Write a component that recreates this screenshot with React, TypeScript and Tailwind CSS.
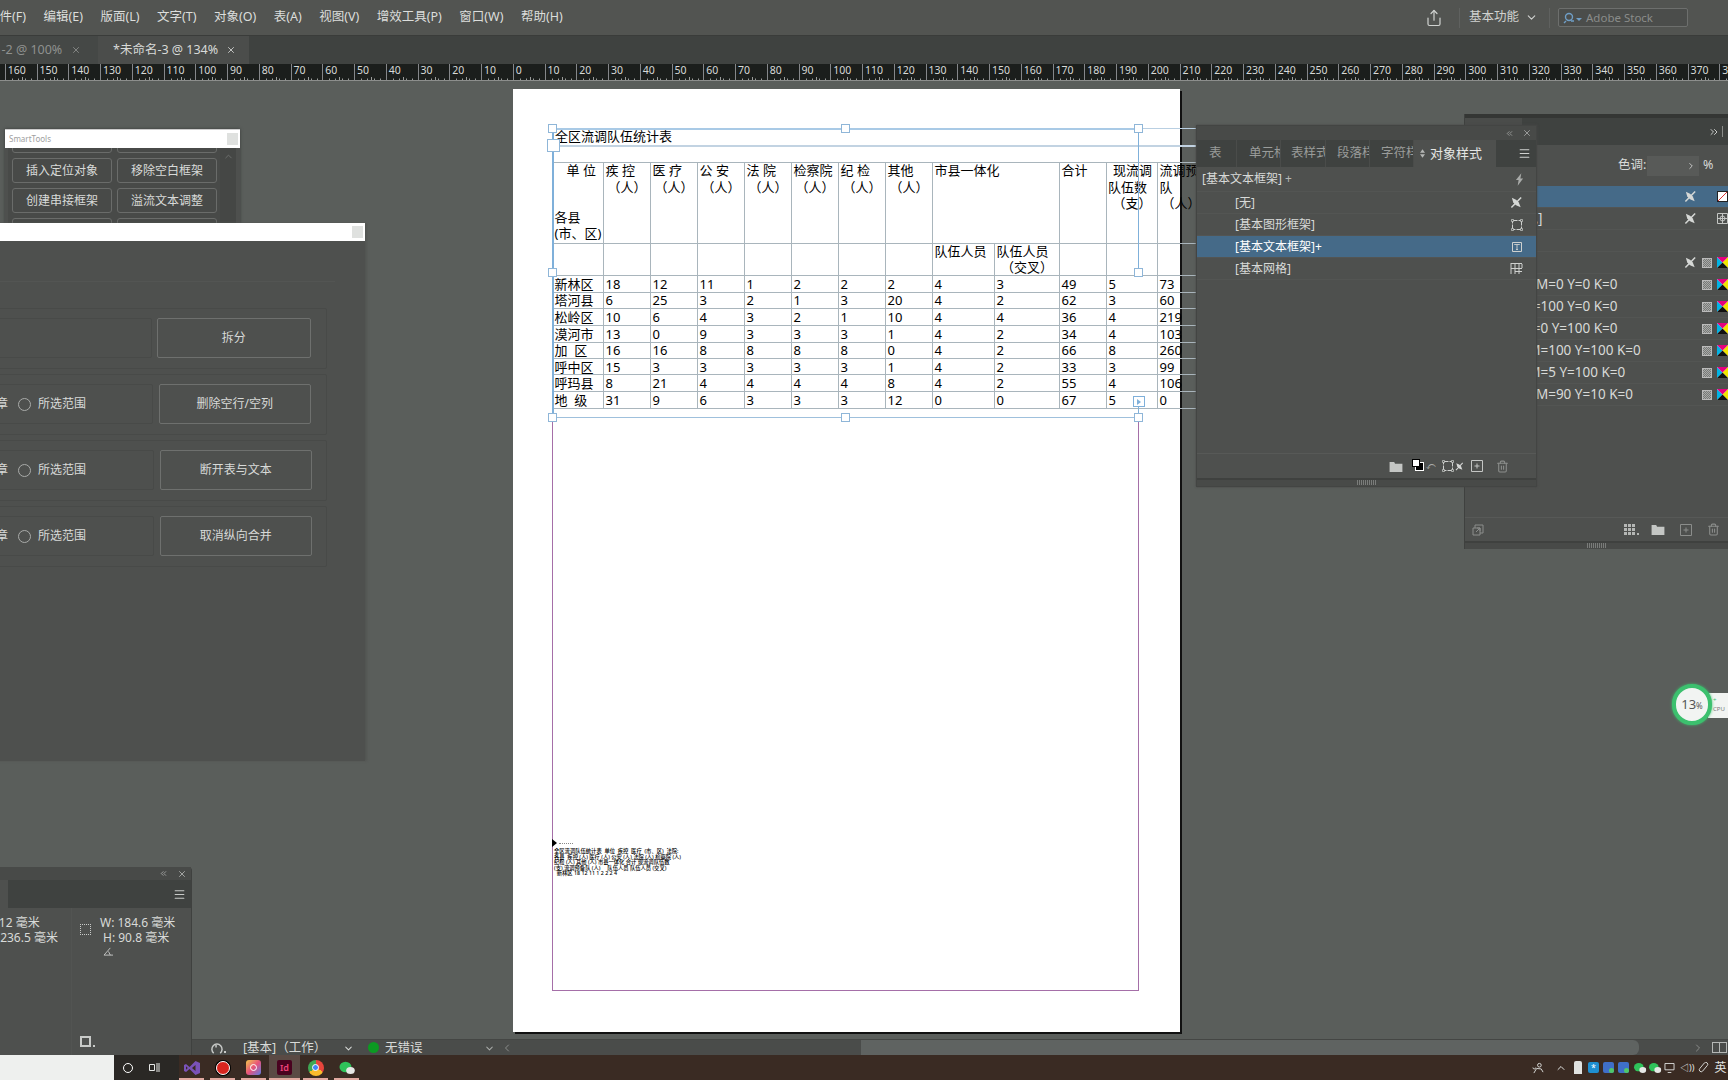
import React from 'react'
import { ChevronDown, ChevronLeft, ChevronRight, ChevronUp, ChevronsLeft, ChevronsRight, Menu, Share, Trash2, X } from 'lucide-react'

const font = { fontFamily: '"Noto Sans", "Noto Sans CJK SC", sans-serif' }

const menus = ['文件(F)', '编辑(E)', '版面(L)', '文字(T)', '对象(O)', '表(A)', '视图(V)', '增效工具(P)', '窗口(W)', '帮助(H)']

const rulerMarks: number[] = []
for (let n = -170; n <= 390; n += 10) rulerMarks.push(n)

const colWidths = [51, 47, 47, 47, 47, 47, 47, 47, 62, 65, 47, 51, 47]

const bodyRows = [
  { h: 'h-[16.3px]', cells: ['新林区', '18', '12', '11', '1', '2', '2', '2', '4', '3', '49', '5', '73'] },
  { h: 'h-[16.3px]', cells: ['塔河县', '6', '25', '3', '2', '1', '3', '20', '4', '2', '62', '3', '60'] },
  { h: 'h-[17px]', cells: ['松岭区', '10', '6', '4', '3', '2', '1', '10', '4', '4', '36', '4', '219'] },
  { h: 'h-[16.7px]', cells: ['漠河市', '13', '0', '9', '3', '3', '3', '1', '4', '2', '34', '4', '103'] },
  { h: 'h-[16.3px]', cells: ['加  区', '16', '16', '8', '8', '8', '8', '0', '4', '2', '66', '8', '260'] },
  { h: 'h-[16.4px]', cells: ['呼中区', '15', '3', '3', '3', '3', '3', '1', '4', '2', '33', '3', '99'] },
  { h: 'h-[16.6px]', cells: ['呼玛县', '8', '21', '4', '4', '4', '4', '8', '4', '2', '55', '4', '106'] },
  { h: 'h-[17px]', cells: ['地  级', '31', '9', '6', '3', '3', '3', '12', '0', '0', '67', '5', '0'] },
]

const headCols = ['疾 控', '医 疗', '公 安', '法 院', '检察院', '纪 检', '其他']

const cell = 'border border-[#a9b5bc] align-top px-[1.5px] p-0 whitespace-pre overflow-visible'
const strong = 'border-l-[#5f6f78]'

function NibCross({ className = '' }: { className?: string }) {
  return (
    <svg viewBox="0 0 14 14" className={`w-[13px] h-[13px] shrink-0 ${className}`}>
      <path d="M2 2l4.5 2 3 3 2 5-5-2-3-3z" fill="#d6d8d6" />
      <path d="M12 1.5L1.5 12.5" stroke="#d6d8d6" strokeWidth="1.6" />
    </svg>
  )
}

function FrameIcon() {
  return (
    <svg viewBox="0 0 12 12" className="w-[12px] h-[12px]" fill="none" stroke="#cfd1cf">
      <path d="M1.5 1.5h9v9h-9z" strokeDasharray="5 1 3 0" />
      <path d="M.5.5h2v2h-2zM9.5.5h2v2h-2zM.5 9.5h2v2h-2zM9.5 9.5h2v2h-2z" fill="#4e504e" strokeWidth=".7" />
    </svg>
  )
}

function TextFrameIcon() {
  return (
    <svg viewBox="0 0 12 12" className="w-[12px] h-[12px]" fill="none" stroke="#cfd1cf">
      <path d="M1.5 1.5h9v9h-9z" />
      <path d="M3.5 4V3.5h5V4M6 3.5v5M5 8.5h2" strokeWidth=".9" />
    </svg>
  )
}

function GridIcon() {
  return (
    <svg viewBox="0 0 13 13" className="w-[13px] h-[13px]" fill="none" stroke="#cfd1cf">
      <path d="M1 1.5h11M1 6.5h11M1 1v11M5 2v10M9 2v4M12 2v4M5 9.5h7M9 7v5" />
    </svg>
  )
}

function Bolt() {
  return (
    <svg viewBox="0 0 10 14" className="w-[9px] h-[13px]">
      <path d="M7 0L1 7.5h3L3 14l6-8H6z" fill="#a9aba9" />
    </svg>
  )
}

function FolderIcon() {
  return (
    <svg viewBox="0 0 14 12" className="w-[14px] h-[11px]">
      <path d="M0 1h5l1 2h8v9H0z" fill="#c4c6c4" />
    </svg>
  )
}

function PlusBox({ dim = false }: { dim?: boolean }) {
  return (
    <svg viewBox="0 0 12 12" className="w-[12px] h-[12px]" fill="none" stroke={dim ? '#8b8d8b' : '#c4c6c4'}>
      <path d="M.5.5h11v11H.5zM6 3.5v5M3.5 6h5" />
    </svg>
  )
}

function Checker() {
  return <div className="w-[10px] h-[10px] border border-[#bbb] bg-[repeating-conic-gradient(#777977_0_25%,#a9aba9_0_50%)] bg-[length:2px_2px] shrink-0" />
}

function CmykIcon() {
  return (
    <svg viewBox="0 0 11 11" className="w-[11px] h-[11px] shrink-0">
      <path d="M0 0h11v11H0z" fill="#f2f2f2" />
      <path d="M0 0l5.5 5.5L0 11z" fill="#00b4e6" />
      <path d="M11 0L5.5 5.5 11 11z" fill="#f0e500" />
      <path d="M0 0h11L5.5 5.5z" fill="#e6007e" />
      <path d="M0 11h11L5.5 5.5z" fill="#111" />
    </svg>
  )
}

function MiniTicks() {
  return (
    <svg width="32" height="4" className="absolute left-0 bottom-0" stroke="#9a9c9a">
      <path d="M6.5 4V2.5M12.5 4V2.5M16.5 4V1M19.5 4V2.5M25.5 4V2.5" />
    </svg>
  )
}

function Handle({ className }: { className: string }) {
  return <div className={`absolute w-[9px] h-[9px] bg-white border border-[#8fb6d8] z-20 ${className}`} />
}

function MenuBar() {
  return (
    <div className="h-[35px] shrink-0 bg-[#525451] flex items-center overflow-hidden">
      <div className="flex items-center gap-[17.5px] -ml-[13px] text-[12.5px] text-[#dcdedc]">
        {menus.map(m => <span key={m} className="whitespace-nowrap">{m}</span>)}
      </div>
      <div className="ml-auto flex items-center text-[#d0d2d0]">
        <Share className="w-[18px] h-[18px]" strokeWidth={1.6} />
        <div className="w-px h-[20px] bg-[#5f615f] ml-[16px]" />
        <span className="ml-[9px] text-[12.5px]">基本功能</span>
        <ChevronDown className="w-[13px] h-[13px] ml-[6px]" strokeWidth={2} />
        <div className="w-px h-[20px] bg-[#5f615f] ml-[11px]" />
        <div className="ml-[8px] mr-[40px] w-[130px] h-[19px] border border-[#6d6f6d] rounded-[2px] bg-[#4b4d4b] flex items-center pl-[4px] text-[11.5px] text-[#8a8c8a]">
          <svg viewBox="0 0 20 12" className="w-[20px] h-[12px] mr-[3px]" fill="none" stroke="#6f9ec6" strokeWidth="1.4">
            <circle cx="6" cy="5" r="3.5" />
            <path d="M3 9l-2 2M8 9h3" />
            <path d="M13 6h6l-3 3z" fill="#6f9ec6" stroke="none" />
          </svg>
          Adobe Stock
        </div>
      </div>
    </div>
  )
}

function TabBar() {
  return (
    <div className="h-[29px] shrink-0 bg-[#3f4240] border-t border-[#3a3c3a] flex items-stretch overflow-hidden text-[12.5px]">
      <div className="w-[98px] shrink-0 bg-[#454846] flex items-center text-[#8f918f]">
        <span className="-ml-[11px] whitespace-nowrap">名-2 @ 100%</span>
        <X className="w-[10px] h-[10px] ml-[9px]" />
      </div>
      <div className="w-[151px] shrink-0 bg-[#4b4d4b] flex items-center pl-[15px] text-[#d8dad8]">
        <span className="whitespace-nowrap">*未命名-3 @ 134%</span>
        <X className="w-[10px] h-[10px] ml-[8px]" />
      </div>
    </div>
  )
}

function Ruler() {
  return (
    <div className="h-[17px] shrink-0 bg-[#1b1e1c] border-b border-[#8c8e8c] flex overflow-hidden text-[10.5px] text-[#d8dad8]">
      <div className="flex -ml-[27px]">
        {rulerMarks.map(n => (
          <div key={n} className="relative w-[31.75px] h-[16px] shrink-0 border-l border-[#85878a] pl-[2px] leading-[13px]">
            {Math.abs(n)}
            <MiniTicks />
          </div>
        ))}
      </div>
    </div>
  )
}

function DocPage() {
  return (
    <div className="absolute left-[513px] top-[89px] w-[667px] h-[943px] bg-white shadow-[2px_2px_0_#111] text-black text-[13px] leading-[16.6px]">
      {/* margin guides below the frame */}
      <div className="absolute left-[39px] top-[328px] w-[587px] h-[574px] border-x border-b border-[#a56fa8]" />

      {/* text frame selection */}
      <div className="absolute left-[39px] top-[39px] w-[587px] h-[2px] bg-[#a9cae6] z-10" />
      <div className="absolute left-[626px] top-[39px] w-[70px] h-px bg-[#b9cfe2] z-10" />
      <div className="absolute left-[39px] top-[56px] w-[657px] h-[2px] bg-[#c2d3e2] z-10" />
      <div className="absolute left-[39px] top-[39px] w-[2px] h-[290px] bg-[#7fb0da] z-10" />
      <div className="absolute left-[625px] top-[39px] w-px h-[145px] bg-[#7fb0da] z-10" />
      <div className="absolute left-[625px] top-[307px] w-px h-[21px] bg-[#7fb0da] z-10" />
      <div className="absolute left-[39px] top-[328px] w-[587px] h-px bg-[#9fc0dc] z-10" />
      <Handle className="left-[35px] top-[35px]" />
      <Handle className="left-[328px] top-[35px]" />
      <Handle className="left-[621px] top-[35px]" />
      <div className="absolute left-[34px] top-[50px] w-[13px] h-[13px] bg-white border border-[#8fb6d8] z-20" />
      <Handle className="left-[35px] top-[179px]" />
      <Handle className="left-[621px] top-[179px]" />
      <Handle className="left-[35px] top-[324px]" />
      <Handle className="left-[328px] top-[324px]" />
      <Handle className="left-[621px] top-[324px]" />
      <div className="absolute left-[620px] top-[307px] w-[12px] h-[11px] bg-white border border-[#7fb0da] z-20 flex items-center justify-center">
        <div className="w-0 h-0 border-y-[3px] border-y-transparent border-l-[4px] border-l-[#7fb0da]" />
      </div>

      {/* overflow text of the story */}
      <div className="absolute left-[39px] top-[750px] w-[10px] flex items-center gap-[2px]">
        <div className="w-0 h-0 border-y-[4px] border-y-transparent border-l-[5px] border-l-black shrink-0" />
        <div className="w-[14px] border-t border-dotted border-[#888] shrink-0" />
      </div>
      <div className="absolute left-[41px] top-[760px] w-[132px] text-[5.3px] leading-[5.6px] font-medium whitespace-pre">
        {'全区流调队伍统计表  单位  疾控  医疗  (市、区)  法院:\n各县  疾控 (人) 医疗 (人) 公安 (人) 法院 (人) 检察院 (人)\n纪检 (人) 其他 (人) 市县一体化 合计 现流调队伍数\n(支) 流调预备队 (人)     队伍人员 队伍人员 (交叉)\n  新林区 18 12 11 1 2 2 2 4'}
      </div>

      <div className="pt-[39px] pl-[39px]">
        <div className="pl-[3px] h-[34px] leading-[17px]" style={font}>全区流调队伍统计表</div>
        <table className="table-fixed border-collapse" style={{ width: 651, ...font }}>
          <colgroup>
            {colWidths.map((w, i) => <col key={i} style={{ width: w }} />)}
          </colgroup>
          <tbody>
            <tr className="h-[81.4px]">
              <td className={cell}>
                <div className="-mt-[1px] pl-[12px]">单 位</div>
                <div className="mt-[30px]">各县</div>
                <div>(市、区)</div>
              </td>
              {headCols.map(h => (
                <td key={h} className={cell}>
                  <div className="-mt-[1px]">{h}</div>
                  <div className="text-center">（人）</div>
                </td>
              ))}
              <td colSpan={2} className={`${cell} ${strong}`}><div className="-mt-[1px]">市县一体化</div></td>
              <td className={cell}><div className="-mt-[1px]">合计</div></td>
              <td className={`${cell} ${strong} !px-[1px]`}>
                <div className="-mt-[1px] pl-[5px]">现流调</div>
                <div>队伍数</div>
                <div className="text-center">（支）</div>
              </td>
              <td className={cell}>
                <div className="-mt-[1px]">流调预</div>
                <div>队</div>
                <div className="text-center">（人）</div>
              </td>
            </tr>
            <tr className="h-[32px] leading-[15.4px]">
              <td className={cell} />
              {headCols.map(h => <td key={h} className={cell} />)}
              <td className={`${cell} ${strong}`}>队伍人员</td>
              <td className={cell}>
                <div>队伍人员</div>
                <div className="text-center">（交叉）</div>
              </td>
              <td className={cell} />
              <td className={`${cell} ${strong}`} />
              <td className={cell} />
            </tr>
            {bodyRows.map(r => (
              <tr key={r.cells[0]} className={`${r.h} leading-[14px]`}>
                {r.cells.map((c, i) => (
                  <td key={i} className={`${cell} ${i === 8 || i === 11 ? strong : ''} !align-middle`}>{c}</td>
                ))}
              </tr>
            ))}
          </tbody>
        </table>
      </div>
    </div>
  )
}

function SmartTools() {
  // first and last rows are scrolled out of view, only their borders show
  const labels = ['', '', '插入定位对象', '移除空白框架', '创建串接框架', '溢流文本调整', '', '']
  return (
    <div className="absolute left-[5px] top-[129px] w-[235px] h-[110px] bg-[#4e504e] overflow-hidden z-10 shadow-[0_0_3px_#3a3c3a]">
      <div className="relative z-10 h-[19px] bg-white flex items-center justify-between pl-[4px] pr-[2px] border-t border-[#ccc]">
        <span className="text-[8px] text-[#a0a0a0]">SmartTools</span>
        <div className="w-[11px] h-[12px] bg-[#dfe1df]" />
      </div>
      <div className="flex ml-[3px] h-[91px]">
        <div className="w-[212px] bg-[#484a48] pl-[4px] pr-[3px] -mt-[20px] grid grid-cols-2 gap-x-[5px] gap-y-[5px] auto-rows-[25px] text-[12px] text-[#d8dad8]">
          {labels.map((l, i) => (
            <div key={i} className="border border-[#6a6c6a] rounded-[3px] flex items-center justify-center">{l}</div>
          ))}
        </div>
        <div className="w-[16px] bg-[#454745] flex justify-center pt-[3px]">
          <ChevronUp className="w-[11px] h-[11px] text-[#6f716f]" />
        </div>
      </div>
    </div>
  )
}

const splitRows = [
  { label: '拆分', radio: false, btn: 'w-[154px] mr-[15px]', gap: 'gap-[5px]' },
  { label: '删除空行/空列', radio: true, btn: 'w-[152px] mr-[15px]', gap: 'gap-[6px]' },
  { label: '断开表与文本', radio: true, btn: 'w-[152px] mr-[14px]', gap: 'gap-[6px]' },
  { label: '取消纵向合并', radio: true, btn: 'w-[152px] mr-[14px]', gap: 'gap-[6px]' },
]

function SplitWindow() {
  return (
    <div className="absolute left-[-100px] top-[223px] w-[465px] h-[538px] bg-[#4e504e] z-10 shadow-[2px_0_2px_#525552]">
      <div className="h-[18px] bg-white flex items-center justify-end pr-[2px]">
        <div className="w-[11px] h-[12px] bg-[#dfe1df]" />
      </div>
      <div className="h-[41px] mr-[30px] border-b border-[#535553]" />
      <div className="mt-[26px] ml-[10px] mr-[38.3px] flex flex-col gap-[5.4px] text-[12px] text-[#d8dad8]">
        {splitRows.map(r => (
          <div key={r.label} className={`h-[60.6px] border border-[#484a48] rounded-[2px] flex items-center pl-[5px] ${r.gap}`}>
            <div className="flex-1 h-[40px] border border-[#484a48] rounded-[2px] flex items-center pl-[67px]">
              {r.radio && (
                <>
                  <span className="whitespace-nowrap">文章</span>
                  <div className="w-[13px] h-[13px] rounded-full border border-[#a9aba9] ml-[10px]" />
                  <span className="ml-[7px] whitespace-nowrap">所选范围</span>
                </>
              )}
            </div>
            <div className={`h-[40px] border border-[#6e706e] rounded-[2px] flex items-center justify-center shrink-0 ${r.btn}`}>{r.label}</div>
          </div>
        ))}
      </div>
    </div>
  )
}

function TransformPanel() {
  return (
    <div className="absolute left-0 top-[867px] w-[192px] h-[188px] bg-[#4e504e] border-r border-[#3f413f] z-20 rounded-tr-[4px] text-[12px] text-[#d8dad8] flex flex-col">
      <div className="h-[13px] bg-[#484a48] flex items-center justify-end pr-[4px] gap-[9px] text-[#b5b7b5] shrink-0">
        <ChevronsLeft className="w-[9px] h-[9px]" />
        <X className="w-[10px] h-[10px]" />
      </div>
      <div className="h-[28px] bg-[#3f4240] flex items-center shrink-0">
        <div className="w-[8px] h-full bg-[#4e504e]" />
        <Menu className="w-[13px] h-[13px] ml-auto mr-[5px] text-[#c8cac8]" />
      </div>
      <div className="flex-1 flex overflow-hidden">
        <div className="w-[72px] border-r border-[#525452] pt-[7px] leading-[15px] overflow-hidden whitespace-nowrap shrink-0">
          <div className="-ml-[8px]">112 毫米</div>
          <div className="-ml-[13px]">Y: 236.5 毫米</div>
        </div>
        <div className="flex-1 flex flex-col pl-[8px] pt-[7px]">
          <div className="flex items-start">
            <div className="mt-[9px] w-[11px] h-[11px] border border-dotted border-[#c8cac8] shrink-0" />
            <div className="ml-[9px] leading-[15px] whitespace-nowrap">
              <div>W: 184.6 毫米</div>
              <div className="pl-[3px]">H: 90.8 毫米</div>
              <svg viewBox="0 0 12 10" className="w-[11px] h-[9px] ml-[3px] mt-[2px]" fill="none" stroke="#c8cac8">
                <path d="M1 9h10M1 9l7-8M6 5l2 4" />
              </svg>
            </div>
          </div>
          <div className="mt-auto mb-[8px] flex items-end">
            <div className="w-[11px] h-[11px] border-2 border-[#c8cac8]" />
            <div className="w-[2px] h-[2px] bg-[#c8cac8] ml-[2px]" />
          </div>
        </div>
      </div>
    </div>
  )
}

const styleTabs = [
  { t: '表', w: 'w-[40px]', c: 'pl-[12px]' },
  { t: '单元格样式', w: 'w-[44px]', c: 'pl-[12px]' },
  { t: '表样式', w: 'w-[45px]', c: 'pl-[10px]' },
  { t: '段落样式', w: 'w-[44px]', c: 'pl-[11px]' },
  { t: '字符样式', w: 'w-[44px]', c: 'pl-[11px]' },
]

const styleRows = [
  { t: '[无]', icon: <NibCross />, sel: false },
  { t: '[基本图形框架]', icon: <FrameIcon />, sel: false },
  { t: '[基本文本框架]+', icon: <TextFrameIcon />, sel: true },
  { t: '[基本网格]', icon: <GridIcon />, sel: false },
]

function ObjectStyles() {
  return (
    <div className="absolute left-[1196px] top-[125px] w-[341px] h-[362px] bg-[#4e504e] border border-[#434543] z-30 flex flex-col text-[12px] text-[#d8dad8] shadow-[0_0_2px_#444]">
      <div className="h-[14px] bg-[#484a48] flex items-center justify-end pr-[4px] gap-[8px] text-[#a9aba9] shrink-0">
        <ChevronsLeft className="w-[9px] h-[9px]" />
        <X className="w-[10px] h-[10px]" />
      </div>
      <div className="h-[27px] bg-[#3f4240] flex shrink-0">
        {styleTabs.map(s => (
          <div key={s.t} className={`${s.w} ${s.c} border-r border-[#4a4c4a] overflow-hidden whitespace-nowrap flex items-center text-[#9a9c9a] text-[12.5px]`}>{s.t}</div>
        ))}
        <div className="w-[82px] bg-[#4e504e] flex items-center pl-[6px] text-[#e4e6e4] text-[13px] whitespace-nowrap">
          <svg viewBox="0 0 6 10" className="w-[5px] h-[9px] mr-[5px]" fill="#b5b7b5">
            <path d="M3 0l3 4H0zM3 10l3-4H0z" />
          </svg>
          对象样式
        </div>
        <Menu className="w-[13px] h-[13px] ml-auto mr-[5px] self-center text-[#d0d2d0]" />
      </div>
      <div className="h-[25px] flex items-center pl-[5px] pr-[12px] justify-between border-b border-[#535553] shrink-0">
        <span>[基本文本框架]<span className="text-[#b5b7b5]"> +</span></span>
        <Bolt />
      </div>
      {styleRows.map(r => (
        <div key={r.t} className={`h-[22px] flex items-center pl-[38px] pr-[13px] justify-between border-b border-[#535553] shrink-0 ${r.sel ? 'bg-[#456a88] text-white' : ''}`}>
          <span>{r.t}</span>
          {r.icon}
        </div>
      ))}
      <div className="flex-1" />
      <div className="h-[25px] border-t border-[#575957] flex items-center shrink-0 text-[#c4c6c4]">
        <div className="ml-[192px]"><FolderIcon /></div>
        <div className="ml-[9px] relative w-[14px] h-[14px]">
          <div className="absolute left-[3px] top-[3px] w-[9px] h-[9px] bg-black border border-white" />
          <div className="absolute left-0 top-0 w-[8px] h-[8px] bg-white border border-black" />
        </div>
        <span className="text-[9px] text-[#a9aba9]">⤺</span>
        <div className="ml-[6px]"><FrameIcon /></div>
        <NibCross className="!w-[9px] !h-[9px] ml-[1px]" />
        <div className="ml-[7px]"><PlusBox /></div>
        <Trash2 className="w-[13px] h-[13px] ml-[13px] text-[#8b8d8b]" />
      </div>
      <ResizeGrip />
    </div>
  )
}

function ResizeGrip() {
  return (
    <div className="h-[8px] bg-[#484a48] border-t-2 border-[#3f413f] flex justify-center shrink-0">
      <div className="w-[20px] h-[5px] bg-[repeating-linear-gradient(90deg,#7a7c7a_0_1px,transparent_1px_2px)]" />
    </div>
  )
}

const swatches = [
  { t: '', sel: true, nib: true, white: true },
  { t: '[套版色]', sel: false, nib: true, reg: true },
  { t: '', sel: false },
  { t: '[黑色]', sel: false, nib: true, marks: true },
  { t: 'C=100 M=0 Y=0 K=0', sel: false, marks: true },
  { t: 'C=0 M=100 Y=0 K=0', sel: false, marks: true },
  { t: 'C=0 M=0 Y=100 K=0', sel: false, marks: true },
  { t: 'C=15 M=100 Y=100 K=0', sel: false, marks: true },
  { t: 'C=75 M=5 Y=100 K=0', sel: false, marks: true },
  { t: 'C=100 M=90 Y=10 K=0', sel: false, marks: true },
]

function SwatchPanel() {
  return (
    <div className="absolute left-[1464px] top-[114px] w-[264px] h-[435px] bg-[#4e504e] border-l border-[#3f413f] z-20 flex flex-col text-[13.5px] text-[#d8dad8]">
      <div className="h-[31px] bg-[#3f4240] border-t-4 border-[#343634] flex items-stretch shrink-0">
        <div className="w-[57px] bg-[#4a4c4a]" />
        <div className="ml-auto flex items-center pr-[5px] text-[#c8cac8]">
          <ChevronsRight className="w-[12px] h-[12px]" />
          <div className="w-px h-[11px] bg-[#8a8c8a] ml-[2px]" />
        </div>
      </div>
      <div className="h-[41px] flex items-center pl-[153px] shrink-0 text-[12.5px]">
        <span className="w-[29px] whitespace-nowrap">色调:</span>
        <div className="w-[52px] h-[20px] bg-[#585a58] flex items-center justify-end pr-[3px]">
          <ChevronRight className="w-[10px] h-[10px]" />
        </div>
        <span className="ml-[4px]">%</span>
      </div>
      {swatches.map((s, i) => (
        <div key={i} className={`h-[22px] flex items-center shrink-0 border-b border-[#535553] ${s.sel ? 'bg-[#456a88]' : ''}`}>
          <span className="ml-[28px] whitespace-nowrap">{s.t}</span>
          <div className="ml-auto flex items-center">
            {s.nib && <NibCross className="mr-[5px]" />}
            {s.marks ? <Checker /> : <div className="w-[10px] shrink-0" />}
            {s.white && (
              <div className="w-[11px] h-[11px] bg-white ml-[5px] bg-[linear-gradient(135deg,transparent_45%,#d33_45%,#d33_55%,transparent_55%)] border border-[#222]" />
            )}
            {s.reg && (
              <svg viewBox="0 0 11 11" className="w-[11px] h-[11px] ml-[5px]" fill="none" stroke="#c4c6c4">
                <path d="M.5.5h10v10H.5z" />
                <circle cx="5.5" cy="5.5" r="2.5" />
                <path d="M5.5 1v9M1 5.5h9" />
              </svg>
            )}
            {s.marks && <div className="ml-[5px]"><CmykIcon /></div>}
          </div>
        </div>
      ))}
      <div className="flex-1" />
      <div className="h-[24px] border-t border-[#575957] flex items-center shrink-0 text-[#b5b7b5]">
        <svg viewBox="0 0 12 12" className="w-[12px] h-[12px] ml-[7px]" fill="none" stroke="#8b8d8b">
          <path d="M3 4V1h8v8H8M1 4h7v7H1zM4 8l4-4M5 4h3v3" />
        </svg>
        <svg viewBox="0 0 11 11" className="w-[11px] h-[11px] ml-[140px]" fill="#b5b7b5">
          <path d="M0 0h3v3H0zM4 0h3v3H4zM8 0h3v3H8zM0 4h3v3H0zM4 4h3v3H4zM8 4h3v3H8zM0 8h3v3H0zM4 8h3v3H4zM8 8h3v3H8z" />
        </svg>
        <div className="w-[2px] h-[2px] bg-[#b5b7b5] ml-[2px] mt-[9px]" />
        <div className="ml-[12px]"><FolderIcon /></div>
        <div className="ml-[15px]"><PlusBox dim /></div>
        <Trash2 className="w-[13px] h-[13px] ml-[15px] text-[#8b8d8b]" />
      </div>
      <ResizeGrip />
    </div>
  )
}

function CpuWidget() {
  return (
    <>
      <div className="absolute left-[1708px] top-[693px] w-[20px] h-[25px] bg-[#f2f4f2] z-30 pl-[5px] text-[6px] text-[#777] leading-[9px] pt-[3px]">
        <div className="text-[#3cc06e]">+</div>
        <div>CPU</div>
      </div>
      <div className="absolute left-[1672px] top-[684px] w-[40px] h-[41px] rounded-full bg-[#f2f4f2] border-[4px] border-[#3cc06e] shadow-[0_0_3px_#3cc06e] z-30 flex items-center justify-center text-[#555] text-[13px]">
        13<span className="text-[8px] mt-[2px]">%</span>
      </div>
    </>
  )
}

function StatusBar() {
  return (
    <div className="h-[16px] shrink-0 bg-[#4a4c4a] border-t border-[#444644] flex items-center relative text-[#d8dad8] text-[12.5px] overflow-hidden">
      <svg viewBox="0 0 14 14" className="ml-[210px] w-[13px] h-[13px]" fill="none" stroke="#c8cac8" strokeWidth="1.6">
        <path d="M4 13a5.5 5.5 0 1 1 7 0M6.5 3v4" />
      </svg>
      <div className="w-[2px] h-[2px] bg-[#c8cac8] ml-[1px] mt-[8px]" />
      <span className="ml-[17px] mt-[2px] whitespace-pre">[基本]（工作）</span>
      <ChevronDown className="absolute left-[343px] top-[3px] w-[11px] h-[11px]" strokeWidth={2.2} />
      <div className="absolute left-[368px] top-[2px] w-[11px] h-[11px] rounded-full bg-[#0c9a22]" />
      <span className="absolute left-[385px] top-[-2px] leading-[20px]">无错误</span>
      <ChevronDown className="absolute left-[484px] top-[3px] w-[11px] h-[11px] text-[#a9aba9]" strokeWidth={2.2} />
      <ChevronLeft className="absolute left-[501px] top-[2px] w-[12px] h-[12px] text-[#8a8c8a]" />
      <div className="absolute left-[861px] top-0 w-[778px] h-full rounded-r-[6px] bg-[#5f6361]" />
      <ChevronRight className="absolute left-[1692px] top-[2px] w-[12px] h-[12px] text-[#8a8c8a]" />
      <div className="absolute left-[1712px] top-[2px] w-[15px] h-[11px] border border-[#b5b7b5] flex">
        <div className="w-1/2 border-r border-[#b5b7b5]" />
      </div>
    </div>
  )
}

function WeChatIcon() {
  return (
    <svg viewBox="0 0 16 14" className="w-[16px] h-[14px]">
      <ellipse cx="6.5" cy="6" rx="6" ry="5.2" fill="#2fc35a" />
      <ellipse cx="11.5" cy="9.5" rx="4.3" ry="3.6" fill="#e6e8e6" />
    </svg>
  )
}

function ShieldTray() {
  return (
    <div className="relative w-[11px] h-[11px] ml-[4px] bg-[#3f6fc8] rounded-[2px]">
      <div className="absolute right-0 bottom-0 w-[5px] h-[5px] rounded-full bg-[#4fc86a]" />
    </div>
  )
}

function Taskbar() {
  const underline = 'absolute left-0 right-0 bottom-0 h-[2px] bg-[#e0a9a0]'
  return (
    <div className="h-[25px] shrink-0 bg-[#3a2b23] flex items-center relative text-[#e0e2e0]">
      <div className="w-[114px] h-full bg-[#eef0ee] shrink-0" />
      <div className="w-[65px] h-full bg-[#2a2825] flex items-center shrink-0">
        <div className="ml-[9px] w-[10px] h-[10px] rounded-full border-[1.5px] border-white" />
        <svg viewBox="0 0 11 11" className="ml-[16px] w-[11px] h-[11px]" fill="none" stroke="#e6e8e6">
          <path d="M.5 2.5h5v6h-5zM8 1v9M10 1v9" />
        </svg>
      </div>
      <div className="relative w-[25px] h-full flex items-center justify-center shrink-0">
        <svg viewBox="0 0 16 16" className="w-[16px] h-[16px]">
          <path d="M11.5 1L16 3v10l-4.5 2-6-6-3.5 3-2-1V5l2-1 3.5 3z" fill="#7a52b8" />
          <path d="M11.5 5L8 8l3.5 3zM2 6.3v3.4L3.8 8z" fill="#3a2b23" />
        </svg>
        <div className={underline} />
      </div>
      <div className="relative w-[25px] h-full ml-[6px] flex items-center justify-center shrink-0">
        <div className="w-[14px] h-[14px] rounded-full border border-white bg-[#d9241e] ring-1 ring-black" />
        <div className={underline} />
      </div>
      <div className="relative w-[25px] h-full ml-[6px] flex items-center justify-center shrink-0">
        <div className="w-[15px] h-[15px] rounded-[3px] bg-[linear-gradient(135deg,#f2c94c,#e8527a_50%,#5a7fe8)] flex items-center justify-center">
          <div className="w-[7px] h-[7px] rounded-full border border-white" />
        </div>
        <div className={underline} />
      </div>
      <div className="relative w-[31px] h-full ml-[3px] bg-[#5a4a44] flex items-center justify-center shrink-0">
        <div className="w-[15px] h-[15px] rounded-[2px] bg-[#49021f] text-[#f0427c] text-[9px] leading-[15px] text-center font-semibold">Id</div>
        <div className={underline} />
      </div>
      <div className="relative w-[25px] h-full ml-[3px] flex items-center justify-center shrink-0">
        <div className="w-[16px] h-[16px] rounded-full bg-[conic-gradient(#e8453c_0_33%,#f9bb2d_33%_66%,#3ea853_66%)] flex items-center justify-center">
          <div className="w-[7px] h-[7px] rounded-full bg-[#4285f4] border border-white" />
        </div>
        <div className={underline} />
      </div>
      <div className="relative w-[25px] h-full ml-[6px] flex items-center justify-center shrink-0">
        <WeChatIcon />
        <div className={underline} />
      </div>

      <div className="absolute left-[1532px] top-0 h-full w-[196px] flex items-center">
        <svg viewBox="0 0 13 13" className="w-[12px] h-[12px]" fill="none" stroke="#e0e2e0">
          <circle cx="8" cy="3.5" r="2" /><path d="M5 7l5 .5L12 11M5 7l-3 5M1 6a1.5 1.5 0 1 0 3 0" />
        </svg>
        <ChevronUp className="w-[12px] h-[12px] ml-[11px]" />
        <div className="w-[8px] h-[13px] ml-[7px] bg-[#e0e2e0] rounded-t-[2px]" />
        <div className="w-[11px] h-[11px] ml-[6px] bg-[#1e8fd0] rounded-[2px] text-white text-[9px] leading-[12px] text-center">*</div>
        <ShieldTray />
        <ShieldTray />
        <div className="ml-[3px] scale-[0.8]"><WeChatIcon /></div>
        <div className="-ml-[1px] scale-[0.8]"><WeChatIcon /></div>
        <svg viewBox="0 0 12 11" className="w-[11px] h-[10px] ml-[1px]" fill="none" stroke="#e0e2e0">
          <path d="M1 .5h10v7H1zM4 10.5h4" />
        </svg>
        <span className="text-[9px] ml-[5px] whitespace-nowrap">◁))</span>
        <svg viewBox="0 0 12 12" className="w-[11px] h-[11px] ml-[4px]" fill="none" stroke="#e0e2e0">
          <path d="M2 7a2 2 0 0 0 3 3l5-6a2 2 0 0 0-3-3z" />
        </svg>
        <span className="text-[12px] ml-[5px]">英</span>
      </div>
    </div>
  )
}

export default function App() {
  return (
    <div className="relative w-[1728px] h-[1080px] overflow-hidden flex flex-col bg-[#5a5e5b]" style={font}>
      <MenuBar />
      <TabBar />
      <Ruler />
      <div className="flex-1" />
      <StatusBar />
      <Taskbar />

      <DocPage />
      <SmartTools />
      <SplitWindow />
      <TransformPanel />
      <SwatchPanel />
      <ObjectStyles />
      <CpuWidget />
    </div>
  )
}
